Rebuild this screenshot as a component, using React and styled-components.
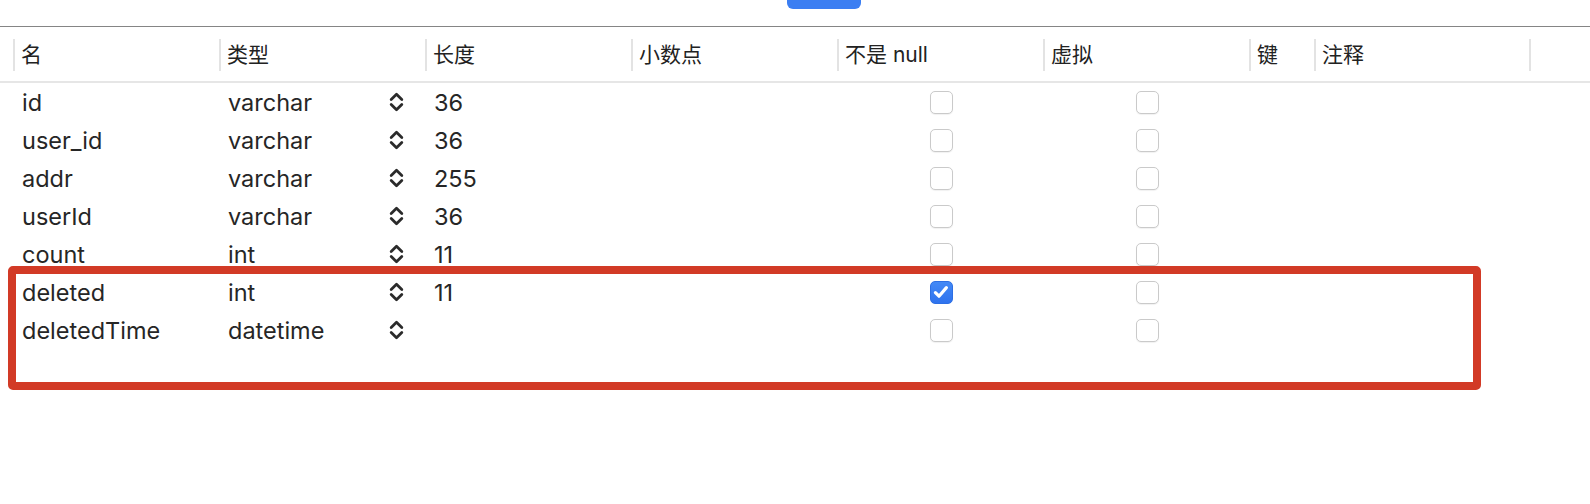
import React from "react";
import styled, { createGlobalStyle } from "styled-components";

const Global = createGlobalStyle`
  html, body { margin: 0; padding: 0; background: #ffffff; }
  body { font-family: Inter, "Noto Sans CJK SC", sans-serif; color: #262626; }
`;

const Page = styled.div`
  width: 1590px;
  height: 504px;
  background: #fff;
  overflow: hidden;
`;

const Toolbar = styled.div`
  height: 26px;
  display: flex;
  align-items: flex-start;
  padding-left: 787px;
`;

const TopButton = styled.div`
  width: 74px;
  height: 9px;
  background: #3b7ef2;
  border-radius: 0 0 6px 6px;
`;

const Table = styled.div`
  position: relative;
  border-top: 1px solid #858585;
`;

const cols = "repeat(6, 206px) 65px 215px 1fr";

const HeaderRow = styled.div`
  display: grid;
  grid-template-columns: ${cols};
  padding-left: 14px;
  height: 54px;
  border-bottom: 2px solid #e6e6e6;
`;

const HeadCell = styled.div`
  position: relative;
  display: flex;
  align-items: center;
  padding-left: 7px;
  padding-bottom: 2px;
  font-family: Inter, "Noto Sans CJK SC", sans-serif;
  font-size: 21px;
  color: #222;
  &::before {
    content: "";
    position: absolute;
    left: -1px;
    top: 12px;
    width: 2px;
    height: 32px;
    background: #e3e3e3;
  }
`;

const Body = styled.div`
  display: flex;
  flex-direction: column;
`;

const Row = styled.div`
  display: grid;
  grid-template-columns: ${cols};
  padding-left: 14px;
  height: 38px;
`;

const Cell = styled.div`
  display: flex;
  align-items: center;
  justify-content: ${(p) => (p.$center ? "center" : "flex-start")};
  padding-left: ${(p) => (p.$center ? "0" : "8px")};
  font-size: 23.5px;
  color: #262626;
  white-space: nowrap;
`;

const TypeText = styled.span`
  flex: 1;
`;

const StepperIcon = styled.svg`
  width: 17px;
  height: 22px;
  flex-shrink: 0;
  margin-right: 21px;
`;

const Box = styled.div`
  width: 23px;
  height: 23px;
  box-sizing: border-box;
  border-radius: 5px;
  display: flex;
  align-items: center;
  justify-content: center;
  ${(p) =>
    p.$checked
      ? `background: linear-gradient(#4389f6, #2f73ee); border: 1px solid #2d6fe4;`
      : `background: #fff; border: 1px solid #cacaca; box-shadow: 0 1px 1px rgba(0,0,0,0.06);`}
`;

const Highlight = styled.div`
  position: absolute;
  left: 8px;
  top: 239px;
  width: 1473px;
  height: 124px;
  box-sizing: border-box;
  border: 8px solid #d23a26;
  border-radius: 5px;
  pointer-events: none;
`;

const Stepper = () => (
  <StepperIcon viewBox="0 0 17 22">
    <path d="M3.2 8.4 L8.5 3.2 L13.8 8.4" fill="none" stroke="#2b2b2b" strokeWidth="2.8" strokeLinecap="round" strokeLinejoin="round" />
    <path d="M3.2 13.6 L8.5 18.8 L13.8 13.6" fill="none" stroke="#2b2b2b" strokeWidth="2.8" strokeLinecap="round" strokeLinejoin="round" />
  </StepperIcon>
);

const Check = ({ checked }) => (
  <Box $checked={checked}>
    {checked && (
      <svg width="16" height="14" viewBox="0 0 16 14">
        <path d="M2.4 7.6 L6 11.2 L13.4 2.6" fill="none" stroke="#fff" strokeWidth="3.2" strokeLinecap="round" strokeLinejoin="round" />
      </svg>
    )}
  </Box>
);

const headers = ["名", "类型", "长度", "小数点", "不是 null", "虚拟", "键", "注释", ""];

const rows = [
  { name: "id", type: "varchar", len: "36", nn: false },
  { name: "user_id", type: "varchar", len: "36", nn: false },
  { name: "addr", type: "varchar", len: "255", nn: false },
  { name: "userId", type: "varchar", len: "36", nn: false },
  { name: "count", type: "int", len: "11", nn: false },
  { name: "deleted", type: "int", len: "11", nn: true },
  { name: "deletedTime", type: "datetime", len: "", nn: false },
];

export default function App() {
  return (
    <Page>
      <Global />
      <Toolbar>
        <TopButton />
      </Toolbar>
      <Table>
        <HeaderRow>
          {headers.map((h, i) => (
            <HeadCell key={i}>{h}</HeadCell>
          ))}
        </HeaderRow>
        <Body>
          {rows.map((r) => (
            <Row key={r.name}>
              <Cell>{r.name}</Cell>
              <Cell>
                <TypeText>{r.type}</TypeText>
                <Stepper />
              </Cell>
              <Cell>{r.len}</Cell>
              <Cell />
              <Cell $center>
                <Check checked={r.nn} />
              </Cell>
              <Cell $center>
                <Check checked={false} />
              </Cell>
              <Cell />
              <Cell />
              <Cell />
            </Row>
          ))}
        </Body>
        <Highlight />
      </Table>
    </Page>
  );
}
